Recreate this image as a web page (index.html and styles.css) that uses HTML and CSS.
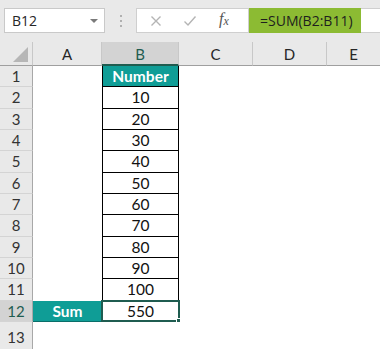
FILE: index.html
```html
<!DOCTYPE html>
<html>
<head>
<meta charset="utf-8">
<link rel="stylesheet" href="styles.css">
</head>
<body>
<div class="toolbar">
  <div class="namebox">
    <span class="name">B12</span>
    <span class="caret"></span>
  </div>
  <div class="dots"><i></i><i></i><i></i></div>
  <div class="buttons">
    <svg class="btn-x" width="12" height="12" viewBox="0 0 12 12"><path d="M1.5 1.5 L10.5 10.5 M10.5 1.5 L1.5 10.5" stroke="#b4b4b4" stroke-width="1.4" fill="none"/></svg>
    <svg class="btn-ok" width="14" height="12" viewBox="0 0 14 12"><path d="M1.5 6.5 L5 10 L12.5 1.5" stroke="#b4b4b4" stroke-width="1.4" fill="none"/></svg>
    <span class="fx">f<sub>x</sub></span>
  </div>
  <div class="formula">
    <span class="ftext">=SUM(B2:B11)</span>
  </div>
</div>
<div class="sheet">
  <div class="corner"><span class="tri"></span></div>
  <div class="colhdr">A</div>
  <div class="colhdr sel">B</div>
  <div class="colhdr">C</div>
  <div class="colhdr">D</div>
  <div class="colhdr last">E</div>

  <div class="rowhdr">1</div><div class="cell"></div><div class="cell b head">Number</div><div class="cell"></div><div class="cell"></div><div class="cell"></div>
  <div class="rowhdr">2</div><div class="cell"></div><div class="cell b">10</div><div class="cell"></div><div class="cell"></div><div class="cell"></div>
  <div class="rowhdr">3</div><div class="cell"></div><div class="cell b">20</div><div class="cell"></div><div class="cell"></div><div class="cell"></div>
  <div class="rowhdr">4</div><div class="cell"></div><div class="cell b">30</div><div class="cell"></div><div class="cell"></div><div class="cell"></div>
  <div class="rowhdr">5</div><div class="cell"></div><div class="cell b">40</div><div class="cell"></div><div class="cell"></div><div class="cell"></div>
  <div class="rowhdr">6</div><div class="cell"></div><div class="cell b">50</div><div class="cell"></div><div class="cell"></div><div class="cell"></div>
  <div class="rowhdr">7</div><div class="cell"></div><div class="cell b">60</div><div class="cell"></div><div class="cell"></div><div class="cell"></div>
  <div class="rowhdr">8</div><div class="cell"></div><div class="cell b">70</div><div class="cell"></div><div class="cell"></div><div class="cell"></div>
  <div class="rowhdr">9</div><div class="cell"></div><div class="cell b">80</div><div class="cell"></div><div class="cell"></div><div class="cell"></div>
  <div class="rowhdr">10</div><div class="cell"></div><div class="cell b">90</div><div class="cell"></div><div class="cell"></div><div class="cell"></div>
  <div class="rowhdr">11</div><div class="cell"></div><div class="cell b">100</div><div class="cell"></div><div class="cell"></div><div class="cell"></div>
  <div class="rowhdr selrow">12</div><div class="cell sum">Sum</div><div class="cell active">550<span class="handle"></span></div><div class="cell"></div><div class="cell"></div><div class="cell"></div>
  <div class="rowhdr lastrow">13</div><div class="cell"></div><div class="cell"></div><div class="cell"></div><div class="cell"></div><div class="cell"></div>
</div>
</body>
</html>
```
FILE: styles.css
```css
* { box-sizing: border-box; }
html, body { margin: 0; padding: 0; background: #fff; overflow: hidden; }
body { width: 380px; height: 349px; font-family: Lato, "Liberation Sans", sans-serif; }

.toolbar {
  height: 42px;
  background: #e9e9e9;
  display: flex;
  align-items: flex-start;
  padding: 8px 0 0 4px;
}
.namebox {
  width: 101px;
  height: 25px;
  background: #fff;
  border: 1px solid #c9c9c9;
  display: flex;
  align-items: center;
  justify-content: space-between;
  padding: 0 6px 0 7px;
}
.name { font-family: "Open Sans", sans-serif; font-size: 14px; color: #262626; }
.caret {
  width: 0; height: 0;
  border-left: 4px solid transparent;
  border-right: 4px solid transparent;
  border-top: 4px solid #7a7a7a;
}
.dots {
  width: 31px;
  height: 25px;
  display: flex;
  flex-direction: column;
  align-items: center;
  justify-content: center;
  gap: 3px;
}
.dots i { display: block; width: 2px; height: 2px; background: #b0b0b0; }
.buttons {
  width: 112px;
  height: 25px;
  background: #fff;
  border: 1px solid #cfcfcf;
  border-right: none;
  display: flex;
  align-items: center;
  padding-left: 13px;
}
.btn-x { margin-right: 21px; }
.btn-ok { margin-right: 22px; }
.fx {
  font-family: "Liberation Serif", serif;
  font-style: italic;
  font-size: 16px;
  color: #555;
  margin-top: -2px;
}
.fx sub { font-size: 12px; vertical-align: -1px; }
.formula {
  flex: 1;
  height: 25px;
  background: #fff;
  border: 1px solid #cfcfcf;
  border-right: none;
  display: flex;
}
.ftext {
  width: 112px;
  background: #8cbb33;
  font-family: "Open Sans", sans-serif;
  font-size: 14px;
  color: #1e1e1e;
  line-height: 23px;
  padding-left: 11px;
  margin-top: -1px;
  height: 25px;
  padding-top: 1px;
}

.sheet {
  display: grid;
  grid-template-columns: 33px 69px 77px 74px 74px 53px;
  grid-template-rows: 24px repeat(12, 21.33px) 30px;
}
.corner {
  background: #e9e9e9;
  border-right: 1px solid #c8c8c8;
  border-bottom: 1px solid #9f9f9f;
  position: relative;
}
.tri {
  position: absolute;
  right: 4px;
  bottom: 3px;
  width: 0; height: 0;
  border-left: 15px solid transparent;
  border-bottom: 15px solid #b6b6b6;
}
.colhdr {
  background: #e9e9e9;
  border-right: 1px solid #c8c8c8;
  border-bottom: 1px solid #9f9f9f;
  font-size: 15px;
  color: #262626;
  display: flex;
  align-items: center;
  justify-content: center;
  padding-top: 1px;
}
.colhdr.sel {
  background: #d3d3d3;
  color: #1f5c50;
  border-bottom: 2px solid #1f5c50;
}
.colhdr.last { border-right: none; }
.rowhdr {
  background: #e9e9e9;
  border-right: 1px solid #a8a8a8;
  border-bottom: 1px solid #d4d4d4;
  font-size: 15px;
  color: #333;
  display: flex;
  align-items: center;
  justify-content: center;
}
.rowhdr.selrow { background: #d3d3d3; color: #1f5c50; }
.rowhdr.lastrow { border-bottom: none; }
.cell {
  font-size: 15.5px;
  color: #111;
  display: flex;
  align-items: center;
  justify-content: center;
}
.cell.b {
  border-left: 1px solid #000;
  border-right: 1px solid #000;
  border-bottom: 1px solid #000;
}
.cell.head {
  background: #0f9d96;
  color: #fff;
  font-weight: bold;
}
.cell.sum {
  background: #0f9d96;
  color: #fff;
  font-weight: bold;
  border-bottom: 1px solid #0a6e69;
}
.cell.active {
  border: 2px solid #1f5c50;
  position: relative;
  margin-top: -1px;
  margin-left: -1px;
  margin-right: -1px;
}
.handle {
  position: absolute;
  right: -3px;
  bottom: -3px;
  width: 5px;
  height: 5px;
  background: #1f5c50;
  border: 1px solid #fff;
}
```
